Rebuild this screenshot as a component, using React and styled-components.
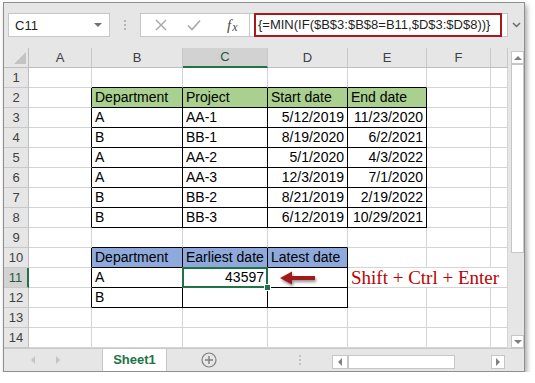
import styled, { createGlobalStyle } from "styled-components";

const GlobalStyle = createGlobalStyle`
  html, body {
    margin: 0;
    padding: 0;
    background: #fff;
  }
  body {
    font-family: "Liberation Sans", Arial, sans-serif;
  }
`;

const COLS = ["A", "B", "C", "D", "E", "F", "G"];
const ROWS = 14;
const GRID_LINE = "#d4d4d4";
const EXCEL_GREEN = "#217346";

const tables = [
  { r1: 2, r2: 8, c1: 1, c2: 4, fill: "#a9d08e" },
  { r1: 10, r2: 12, c1: 1, c2: 3, fill: "#8ea9db" },
];

const projects = [
  ["A", "AA-1", "5/12/2019", "11/23/2020"],
  ["B", "BB-1", "8/19/2020", "6/2/2021"],
  ["A", "AA-2", "5/1/2020", "4/3/2022"],
  ["A", "AA-3", "12/3/2019", "7/1/2020"],
  ["B", "BB-2", "8/21/2019", "2/19/2022"],
  ["B", "BB-3", "6/12/2019", "10/29/2021"],
];

// cell contents keyed by "row-col" (col 0 = A)
const values = {
  "2-1": { text: "Department" },
  "2-2": { text: "Project" },
  "2-3": { text: "Start date" },
  "2-4": { text: "End date" },
  "10-1": { text: "Department" },
  "10-2": { text: "Earliest date" },
  "10-3": { text: "Latest date" },
  "11-1": { text: "A" },
  "11-2": { text: "43597", right: true },
  "12-1": { text: "B" },
};
projects.forEach((p, i) => {
  const r = i + 3;
  values[`${r}-1`] = { text: p[0] };
  values[`${r}-2`] = { text: p[1] };
  values[`${r}-3`] = { text: p[2], right: true };
  values[`${r}-4`] = { text: p[3], right: true };
});

const tableAt = (r, c) =>
  tables.find((t) => r >= t.r1 && r <= t.r2 && c >= t.c1 && c <= t.c2);

const Window = styled.div`
  box-sizing: border-box;
  width: 522px;
  height: 370px;
  margin: 2px 0 0 3px;
  border: 1px solid #8f8f8f;
  background: #e6e6e6;
  box-shadow: 2px 3px 5px rgba(0, 0, 0, 0.35);
  display: flex;
  flex-direction: column;
  overflow: hidden;
  font-family: "Liberation Sans", Arial, sans-serif;
`;

/* formula bar */

const FormulaBar = styled.div`
  display: flex;
  align-items: flex-start;
  height: 45px;
  box-sizing: border-box;
  padding: 10px 0 0 4px;
`;

const NameBox = styled.div`
  box-sizing: border-box;
  width: 102px;
  height: 24px;
  border: 1px solid #c6c6c6;
  background: #fff;
  display: flex;
  align-items: center;
  justify-content: space-between;
  padding: 0 7px 0 6px;
  font-size: 13px;
  color: #222;
`;

const Caret = styled.span`
  width: 0;
  height: 0;
  border-left: 4px solid transparent;
  border-right: 4px solid transparent;
  border-top: 4px solid #707070;
`;

const Grip = styled.div`
  width: 30px;
  height: 24px;
  display: flex;
  flex-direction: column;
  align-items: center;
  justify-content: center;
  gap: 2px;

  span {
    width: 2px;
    height: 2px;
    background: #b4b4b4;
  }
`;

const FxBox = styled.div`
  box-sizing: border-box;
  width: 110px;
  height: 24px;
  border: 1px solid #c6c6c6;
  background: #fff;
  display: flex;
  align-items: center;
`;

const FxIcon = styled.span`
  display: flex;
  align-items: baseline;
  margin-left: ${(p) => p.$ml}px;
  color: ${(p) => p.$color || "#a8a8a8"};
  font-family: "Liberation Serif", "Times New Roman", serif;
  font-style: italic;
  font-size: 15px;
  line-height: 1;

  small {
    font-size: 12px;
    margin-left: 1px;
    position: relative;
    top: 1px;
  }
`;

const FormulaInput = styled.div`
  box-sizing: border-box;
  width: 258px;
  height: 24px;
  border: 1px solid #c6c6c6;
  border-left: none;
  background: #fff;
  display: flex;
  align-items: flex-start;
`;

const Annotated = styled.div`
  box-sizing: border-box;
  margin: -1px 0 0 4px;
  width: 248px;
  height: 24px;
  border: 2px solid #a8191d;
  padding-left: 2px;
  font-size: 13px;
  line-height: 20px;
  color: #1f1f1f;
  white-space: nowrap;
`;

const Expand = styled.div`
  width: 16px;
  height: 24px;
  display: flex;
  align-items: center;
  justify-content: center;
`;

/* sheet */

const Main = styled.div`
  display: flex;
  height: 300px;
`;

const Sheet = styled.div`
  display: grid;
  grid-template-columns: 25px 63px 91px 85px 80px 79px 64px 17px;
  grid-template-rows: repeat(15, 20px);
  width: 504px;
  background: #fff;
`;

const Corner = styled.div`
  position: relative;
  box-sizing: border-box;
  background: #e6e6e6;
  border-right: 1px solid #bdbdbd;
  border-bottom: 1px solid #bdbdbd;

  &::after {
    content: "";
    position: absolute;
    right: 2px;
    bottom: 3px;
    width: 0;
    height: 0;
    border-left: 12px solid transparent;
    border-bottom: 12px solid #c3c3c3;
  }
`;

const ColHead = styled.div`
  box-sizing: border-box;
  background: ${(p) => (p.$active ? "#d2d2d2" : "#e6e6e6")};
  border-right: 1px solid #c8c8c8;
  border-bottom: ${(p) =>
    p.$active ? `2px solid ${EXCEL_GREEN}` : "1px solid #bdbdbd"};
  text-align: center;
  font-size: 13px;
  line-height: ${(p) => (p.$active ? 18 : 19)}px;
  color: ${(p) => (p.$active ? "#1d5c3a" : "#404040")};
`;

const RowHead = styled.div`
  box-sizing: border-box;
  background: ${(p) => (p.$active ? "#d2d2d2" : "#e6e6e6")};
  border-right: ${(p) =>
    p.$active ? `2px solid ${EXCEL_GREEN}` : "1px solid #bdbdbd"};
  border-bottom: 1px solid #c8c8c8;
  text-align: center;
  font-size: 13px;
  line-height: 19px;
  color: ${(p) => (p.$active ? "#1d5c3a" : "#404040")};
`;

const Cell = styled.div`
  position: relative;
  box-sizing: border-box;
  grid-column: span ${(p) => p.$span || 1};
  background: ${(p) => p.$fill || "#fff"};
  border-right: 1px solid ${(p) => (p.$rightEdge ? "#000" : GRID_LINE)};
  border-bottom: 1px solid ${(p) => (p.$bottomEdge ? "#000" : GRID_LINE)};
  padding: 0 3px;
  font-size: 14px;
  line-height: 19px;
  color: #000;
  text-align: ${(p) => (p.$right ? "right" : "left")};
  white-space: nowrap;
`;

const Selected = styled(Cell)`
  &::after {
    content: "";
    position: absolute;
    top: -1px;
    left: -1px;
    right: -1px;
    bottom: -1px;
    border: 2px solid ${EXCEL_GREEN};
    z-index: 2;
  }

  &::before {
    content: "";
    position: absolute;
    right: -4px;
    bottom: -4px;
    width: 5px;
    height: 5px;
    background: ${EXCEL_GREEN};
    border: 1px solid #fff;
    z-index: 3;
  }
`;

const Note = styled.span`
  font-family: "Liberation Serif", "Times New Roman", serif;
  font-size: 19px;
  color: #c00000;
`;

const ArrowMark = styled.svg`
  display: block;
  margin-left: 8px;
  filter: drop-shadow(1px 2px 1.5px rgba(0, 0, 0, 0.45));
`;

/* vertical scrollbar */

const VScroll = styled.div`
  width: 16px;
  box-sizing: border-box;
  padding: 3px 0 0 3px;
  display: flex;
  flex-direction: column;
`;

const ScrollButton = styled.div`
  box-sizing: border-box;
  width: ${(p) => p.$w || 13}px;
  height: ${(p) => p.$h || 13}px;
  flex-shrink: 0;
  background: #fff;
  border: 1px solid #c6c6c6;
  display: flex;
  align-items: center;
  justify-content: center;
`;

const Thumb = styled.div`
  box-sizing: border-box;
  background: #fff;
  border: 1px solid #c6c6c6;
  flex-shrink: 0;
  width: ${(p) => p.$w}px;
  height: ${(p) => p.$h}px;
`;

const Track = styled.div`
  flex: 1;
`;

const Tri = styled.span`
  width: 0;
  height: 0;
  ${(p) =>
    ({
      up: `border-left: 4px solid transparent; border-right: 4px solid transparent; border-bottom: 4px solid ${p.$c};`,
      down: `border-left: 4px solid transparent; border-right: 4px solid transparent; border-top: 4px solid ${p.$c};`,
      left: `border-top: 4px solid transparent; border-bottom: 4px solid transparent; border-right: 4px solid ${p.$c};`,
      right: `border-top: 4px solid transparent; border-bottom: 4px solid transparent; border-left: 4px solid ${p.$c};`,
    })[p.$dir]}
`;

/* tab bar */

const TabBar = styled.div`
  display: flex;
  height: 23px;
  box-sizing: border-box;
  border-top: 1px solid #c9c9c9;
  background: #e6e6e6;
`;

const TabNav = styled.div`
  width: 99px;
  box-sizing: border-box;
  border-right: 1px solid #c6c6c6;
  display: flex;
  align-items: center;
  padding-left: 27px;
  gap: 21px;
`;

const SheetTab = styled.div`
  width: 64px;
  box-sizing: border-box;
  background: #fff;
  border-right: 1px solid #c6c6c6;
  text-align: center;
  font-size: 13px;
  font-weight: bold;
  line-height: 22px;
  color: ${EXCEL_GREEN};
`;

const AddSheet = styled.div`
  width: 132px;
  display: flex;
  align-items: center;
  padding-left: 34px;
  box-sizing: border-box;
`;

const TabGrip = styled(Grip)`
  width: 33px;
  height: 22px;
  align-items: flex-start;
  padding-left: 0;

  span {
    background: #c2c2c2;
  }
`;

const HScroll = styled.div`
  display: flex;
  margin-top: 6px;
  height: 14px;
`;

function Arrow() {
  return (
    <ArrowMark width="38" height="20" viewBox="0 0 38 20">
      <polygon points="1,10 13,3.5 13,16.5" fill="#a3191c" />
      <rect x="12" y="8" width="24" height="4" fill="#a3191c" />
    </ArrowMark>
  );
}

function renderRow(r) {
  const cells = [];
  for (let c = 0; c < COLS.length; c++) {
    const key = `${r}-${c}`;
    const t = tableAt(r, c);
    const props = {
      key,
      $fill: t && r === t.r1 ? t.fill : undefined,
      $rightEdge: !!(t || tableAt(r, c + 1)),
      $bottomEdge: !!(t || tableAt(r + 1, c)),
    };
    const v = values[key];

    if (r === 11 && c === 2) {
      cells.push(
        <Selected {...props} $right>
          {v.text}
        </Selected>
      );
    } else if (r === 11 && c === 3) {
      cells.push(
        <Cell {...props}>
          <Arrow />
        </Cell>
      );
    } else if (r === 11 && c === 4) {
      // note text overflows across E:G, so no gridlines under it
      cells.push(
        <Cell {...props} $span={3}>
          <Note>Shift + Ctrl + Enter</Note>
        </Cell>
      );
      c += 2;
    } else {
      cells.push(
        <Cell {...props} $right={v && v.right}>
          {v ? v.text : ""}
        </Cell>
      );
    }
  }
  return cells;
}

export default function App() {
  const rows = Array.from({ length: ROWS }, (_, i) => i + 1);

  return (
    <>
      <GlobalStyle />
      <Window>
        <FormulaBar>
          <NameBox>
            <span>C11</span>
            <Caret />
          </NameBox>
          <Grip>
            <span />
            <span />
            <span />
          </Grip>
          <FxBox>
            <FxIcon $ml={14}>
              <svg width="12" height="12" viewBox="0 0 12 12">
                <path d="M1 1 L11 11 M11 1 L1 11" stroke="#a8a8a8" strokeWidth="1.4" />
              </svg>
            </FxIcon>
            <FxIcon $ml={20}>
              <svg width="14" height="12" viewBox="0 0 14 12">
                <path d="M1 6.5 L5 10.5 L13 1.5" fill="none" stroke="#a8a8a8" strokeWidth="1.6" />
              </svg>
            </FxIcon>
            <FxIcon $ml={26} $color="#4a4a4a">
              f<small>x</small>
            </FxIcon>
          </FxBox>
          <FormulaInput>
            <Annotated>{"{=MIN(IF($B$3:$B$8=B11,$D$3:$D$8))}"}</Annotated>
          </FormulaInput>
          <Expand>
            <svg width="9" height="6" viewBox="0 0 9 6">
              <path d="M1 1 L4.5 4.5 L8 1" fill="none" stroke="#6a6a6a" strokeWidth="1.5" />
            </svg>
          </Expand>
        </FormulaBar>

        <Main>
          <Sheet>
            <Corner />
            {COLS.map((c) => (
              <ColHead key={c} $active={c === "C"}>
                {c === "G" ? "" : c}
              </ColHead>
            ))}
            {rows.map((r) => [
              <RowHead key={`h${r}`} $active={r === 11}>
                {r}
              </RowHead>,
              ...renderRow(r),
            ])}
          </Sheet>
          <VScroll>
            <ScrollButton>
              <Tri $dir="up" $c="#808080" />
            </ScrollButton>
            <Thumb $w={13} $h={189} />
            <Track />
            <ScrollButton>
              <Tri $dir="down" $c="#808080" />
            </ScrollButton>
          </VScroll>
        </Main>

        <TabBar>
          <TabNav>
            <Tri $dir="left" $c="#c4c4c4" />
            <Tri $dir="right" $c="#c4c4c4" />
          </TabNav>
          <SheetTab>Sheet1</SheetTab>
          <AddSheet>
            <svg width="16" height="16" viewBox="0 0 16 16">
              <circle cx="8" cy="8" r="7" fill="none" stroke="#7f7f7f" strokeWidth="1.2" />
              <path d="M8 4 V12 M4 8 H12" stroke="#7f7f7f" strokeWidth="1.4" />
            </svg>
          </AddSheet>
          <TabGrip>
            <span />
            <span />
            <span />
          </TabGrip>
          <HScroll>
            <ScrollButton $w={16} $h={14}>
              <Tri $dir="left" $c="#808080" />
            </ScrollButton>
            <Thumb $w={107} $h={14} />
            <Track style={{ width: 36 }} />
            <ScrollButton $w={14} $h={14}>
              <Tri $dir="right" $c="#808080" />
            </ScrollButton>
          </HScroll>
        </TabBar>
      </Window>
    </>
  );
}
